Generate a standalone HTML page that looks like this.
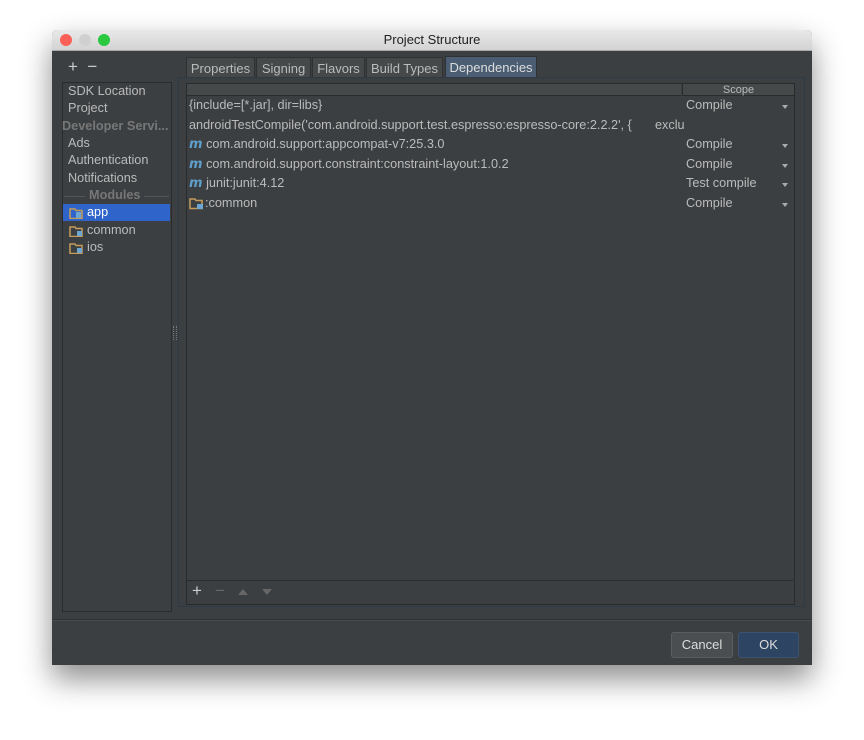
<!DOCTYPE html>
<html><head><style>
body{margin:0;width:864px;height:740px;background:#fff;position:relative;overflow:hidden;font-family:"Liberation Sans",sans-serif;}
.win{position:absolute;left:52px;top:30px;width:760px;height:635px;background:#3c3f41;border-radius:5px 5px 0 0;box-shadow:0 14px 30px rgba(0,0,0,.45);overflow:hidden}
.title{height:20px;background:linear-gradient(#e9e9e9,#d3d3d3);text-align:center;font-size:13px;line-height:20px;color:#222;border-bottom:1px solid #aaa}
.dot{position:absolute;top:4px;width:12px;height:12px;border-radius:50%}
.a{position:absolute;color:#bbb;font-size:12.7px;white-space:nowrap}
.left{position:absolute;left:10px;top:52px;width:108px;height:528px;background:#3c3f41;border:1px solid #2b2b2b}
.tab{position:absolute;top:27px;height:20px;background:#45494a;border:1px solid #2f3133;border-bottom:none;color:#bbb;font-size:13px;line-height:21px;text-align:center;white-space:nowrap;box-sizing:border-box}
.panel{position:absolute;left:126px;top:47px;width:625px;height:528px;border:1px solid #2e3b47}
.table{position:absolute;left:134px;top:53px;width:607px;height:520px;border:1px solid #2b2b2b;background:#3c3f41}
.m{color:#5f9ec9;font-style:italic;font-weight:bold;font-family:"DejaVu Sans",sans-serif;font-size:13px}
.arr{position:absolute;left:730px;width:0;height:0;border-left:3.5px solid transparent;border-right:3.5px solid transparent;border-top:4px solid #aaa}
.btn{position:absolute;top:602px;height:24px;border-radius:3px;font-size:13px;line-height:24px;text-align:center;color:#ddd}
</style></head><body>
<div class="win">
<div class="title">Project Structure</div>
<div class="dot" style="left:8px;background:#fc5f57"></div>
<div class="dot" style="left:27px;background:#d0d0d0"></div>
<div class="dot" style="left:46px;background:#2ac940"></div>
<div class="a" style="left:16px;top:27px;font-size:17px;color:#ccc">+&nbsp;&nbsp;−</div>
<div class="left"></div>
<div class="a" style="left:16px;top:54px">SDK Location</div>
<div class="a" style="left:16px;top:71px">Project</div>
<div class="a" style="left:10px;top:89px;color:#777;font-weight:bold">Developer Servi...</div>
<div class="a" style="left:16px;top:106px">Ads</div>
<div class="a" style="left:16px;top:123px">Authentication</div>
<div class="a" style="left:16px;top:141px">Notifications</div>
<div style="position:absolute;left:12px;top:166px;width:105px;height:1px;background:#555"></div>
<div class="a" style="left:33px;top:158px;color:#777;font-weight:bold;background:#3c3f41;padding:0 4px">Modules</div>
<div style="position:absolute;left:11px;top:174px;width:107px;height:17px;background:#2f65ca"></div>
<svg style="position:absolute;left:17px;top:177px" width="14" height="12"><path d="M1 2h5l1 1.5h6v8H1z" fill="none" stroke="#c59b5b" stroke-width="1.5"/><rect x="7" y="5" width="5" height="6" fill="#6da6d3"/></svg>
<div class="a" style="left:35px;top:175px;color:#fff">app</div>
<svg style="position:absolute;left:17px;top:195px" width="14" height="12"><path d="M1 2h5l1 1.5h6v8H1z" fill="none" stroke="#c59b5b" stroke-width="1.5"/><rect x="8" y="6" width="5" height="5" fill="#6da6d3"/></svg>
<div class="a" style="left:35px;top:193px">common</div>
<svg style="position:absolute;left:17px;top:212px" width="14" height="12"><path d="M1 2h5l1 1.5h6v8H1z" fill="none" stroke="#c59b5b" stroke-width="1.5"/><rect x="8" y="6" width="5" height="5" fill="#6da6d3"/></svg>
<div class="a" style="left:35px;top:210px">ios</div>
<div style="position:absolute;left:121px;top:296px;width:2px;height:14px;border-left:1px dotted #777;border-right:1px dotted #777"></div>

<div class="panel"></div>
<div class="tab" style="left:134px;width:69px">Properties</div>
<div class="tab" style="left:204px;width:55px">Signing</div>
<div class="tab" style="left:260px;width:53px">Flavors</div>
<div class="tab" style="left:314px;width:77px">Build Types</div>
<div class="tab" style="left:393px;width:92px;top:26px;height:21px;background:#4b5d73;color:#ddd">Dependencies</div>
<div class="table"></div>
<div style="position:absolute;left:135px;top:54px;width:494px;height:11px;background:#45494a;border-bottom:1px solid #2b2b2b"></div>
<div style="position:absolute;left:630px;top:54px;width:111px;height:11px;background:#45494a;border-bottom:1px solid #2b2b2b;border-left:1px solid #2b2b2b;color:#bbb;font-size:11px;line-height:12px;text-align:center">Scope</div>
<div class="a" style="left:137px;top:68px">{include=[*.jar], dir=libs}</div>
<div class="a" style="left:137px;top:88px">androidTestCompile('com.android.support.test.espresso:espresso-core:2.2.2', {</div>
<div class="a" style="left:603px;top:88px;background:#3c3f41">exclu</div>
<div class="a" style="left:137px;top:107px"><span class="m">m</span> com.android.support:appcompat-v7:25.3.0</div>
<div class="a" style="left:137px;top:127px"><span class="m">m</span> com.android.support.constraint:constraint-layout:1.0.2</div>
<div class="a" style="left:137px;top:146px"><span class="m">m</span> junit:junit:4.12</div>
<svg style="position:absolute;left:137px;top:167px" width="15" height="13"><path d="M1 2h5l1 1.5h6v8H1z" fill="none" stroke="#c59b5b" stroke-width="1.5"/><rect x="8" y="7" width="6" height="5" fill="#6da6d3"/></svg>
<div class="a" style="left:153px;top:166px">:common</div>
<div class="a" style="left:634px;top:68px">Compile</div><div class="arr" style="top:75px"></div>
<div class="a" style="left:634px;top:107px">Compile</div><div class="arr" style="top:114px"></div>
<div class="a" style="left:634px;top:127px">Compile</div><div class="arr" style="top:134px"></div>
<div class="a" style="left:634px;top:146px">Test compile</div><div class="arr" style="top:153px"></div>
<div class="a" style="left:634px;top:166px">Compile</div><div class="arr" style="top:173px"></div>
<div style="position:absolute;left:135px;top:550px;width:606px;height:1px;background:#2b2b2b"></div>
<div class="a" style="left:140px;top:551px;font-size:17px;color:#ccc">+</div>
<div class="a" style="left:163px;top:551px;font-size:17px;color:#666">−</div>
<svg style="position:absolute;left:186px;top:558px" width="34" height="8"><path d="M0 7L5 1L10 7z M24 1h10l-5 6z" fill="#666"/></svg>
<div style="position:absolute;left:0;top:589px;width:760px;height:1px;background:#2f3133"></div>
<div style="position:absolute;left:0;top:590px;width:760px;height:1px;background:#484b4d"></div>
<div class="btn" style="left:619px;width:60px;background:#4a4e50;border:1px solid #5a5e60">Cancel</div>
<div class="btn" style="left:686px;width:59px;background:#2e4463;border:1px solid #3d5270">OK</div>
</div>
</body></html>
